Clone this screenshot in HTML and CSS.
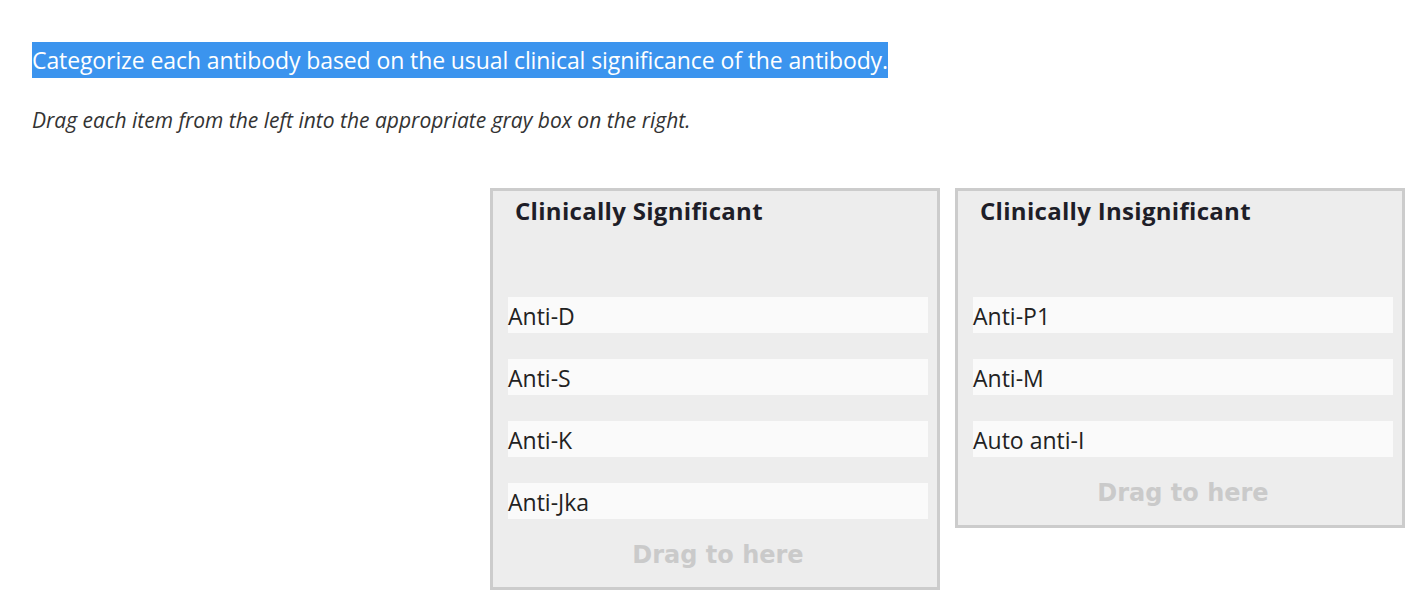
FILE: index.html
```html
<!DOCTYPE html>
<html>
<head>
<meta charset="utf-8">
<link rel="stylesheet" href="styles.css">
</head>
<body>
<div class="page">
  <p class="prompt"><span class="sel">Categorize each antibody based on the usual clinical significance of the antibody.</span></p>
  <p class="hint">Drag each item from the left into the appropriate gray box on the right.</p>
  <div class="board">
    <div class="source"></div>
    <div class="bin bin-a">
      <h3 class="bin-title">Clinically Significant</h3>
      <div class="items">
        <div class="item">Anti-D</div>
        <div class="item">Anti-S</div>
        <div class="item">Anti-K</div>
        <div class="item">Anti-Jka</div>
      </div>
      <div class="drop">Drag to here</div>
    </div>
    <div class="bin bin-b">
      <h3 class="bin-title">Clinically Insignificant</h3>
      <div class="items">
        <div class="item">Anti-P1</div>
        <div class="item">Anti-M</div>
        <div class="item">Auto anti-I</div>
      </div>
      <div class="drop">Drag to here</div>
    </div>
  </div>
</div>
</body>
</html>
```
FILE: styles.css
```css
html, body {
  margin: 0;
  padding: 0;
  background: #ffffff;
}
.page {
  padding: 42px 10px 0 32px;
  font-family: "Open Sans", "Noto Sans", sans-serif;
  color: #222;
}
.prompt {
  margin: 0;
  height: 36px;
}
.sel {
  display: inline-block;
  background: #3b94ee;
  color: #ffffff;
  font-size: 23px;
  line-height: 36px;
  letter-spacing: -0.1px;
}
.hint {
  margin: 29px 0 0 0;
  font-style: italic;
  font-size: 21px;
  line-height: 26px;
  color: #333;
}
.board {
  display: grid;
  grid-template-columns: 443px 450px 450px;
  column-gap: 15px;
  align-items: start;
  margin-top: 55px;
}
.bin {
  box-sizing: border-box;
  border: 3px solid #cccccc;
  background: #ededed;
  padding: 0 9px 0 15px;
}
.bin-title {
  margin: 0;
  padding: 3px 0 0 7px;
  height: 100px;
  box-sizing: border-box;
  font-size: 24px;
  font-weight: 700;
  line-height: 34px;
  color: #1e1e28;
  letter-spacing: 0.3px;
}
.items {
  display: flex;
  flex-direction: column;
  gap: 26px;
  margin-top: 6px;
}
.item {
  background: #fafafa;
  height: 36px;
  line-height: 38px;
  font-size: 23px;
  color: #222;
}
.drop {
  text-align: center;
  font-family: "DejaVu Sans", sans-serif;
  font-weight: 700;
  font-size: 24px;
  color: #cacaca;
  line-height: 36px;
  padding: 18px 0 14px 0;
}
```
